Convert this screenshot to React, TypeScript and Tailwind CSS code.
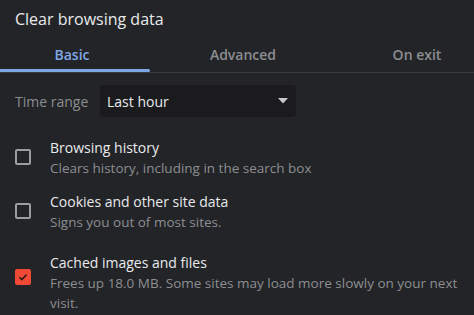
import React from "react";

const font = { fontFamily: '"Open Sans", "Liberation Sans", sans-serif' };

type TItem = {
  title: string;
  desc: string;
  checked: boolean;
  rowClass: string;
  boxClass: string;
};

const items: TItem[] = [
  {
    title: "Browsing history",
    desc: "Clears history, including in the search box",
    checked: false,
    rowClass: "",
    boxClass: "mt-[11px]",
  },
  {
    title: "Cookies and other site data",
    desc: "Signs you out of most sites.",
    checked: false,
    rowClass: "mt-[14px]",
    boxClass: "mt-[11px]",
  },
  {
    title: "Cached images and files",
    desc: "Frees up 18.0 MB. Some sites may load more slowly on your next visit.",
    checked: true,
    rowClass: "mt-[21px]",
    boxClass: "mt-[16px]",
  },
];

const Checkbox = ({ checked }: { checked: boolean }) =>
  checked ? (
    <div className="w-4 h-4 rounded-[2px] bg-[#f04a36] flex items-center justify-center">
      <svg width="12" height="12" viewBox="0 0 12 12">
        <path
          d="M2.5 6.2l2.3 2.3 4.7-4.8"
          fill="none"
          stroke="#2a1a18"
          strokeWidth="1.6"
        />
      </svg>
    </div>
  ) : (
    <div className="w-4 h-4 rounded-[2px] border-2 border-[#9b9ca0]" />
  );

export default function App() {
  return (
    <div
      className="w-[474px] h-[315px] bg-[#232427] text-[#e8eaed] overflow-hidden"
      style={font}
    >
      <div className="pl-[15px] pt-[8px] text-[16px] leading-[22px]">
        Clear browsing data
      </div>

      {/* tabs */}
      <div className="mt-[15px] flex border-b border-[#3c3d40] text-[14px] font-semibold">
        <div className="w-[150px] flex flex-col items-center">
          <span className="text-[#7fa7e6] pr-[6px] h-[24px] leading-[20px]">Basic</span>
          <div className="w-full h-[3px] bg-[#7fa7e6] rounded-r-sm" />
        </div>
        <div className="w-[186px] flex justify-center text-[#8c8e92] leading-[20px]">
          Advanced
        </div>
        <div className="flex-1 flex justify-center pl-[24px] text-[#8c8e92] leading-[20px]">
          On exit
        </div>
      </div>

      {/* time range */}
      <div className="mt-[12px] flex items-center pl-[15px]">
        <span className="w-[85px] text-[14px] text-[#8c8e92]">Time range</span>
        <div className="w-[196px] h-[32px] rounded bg-[#1b1b1e] flex items-center justify-between pl-[7px] pr-[8px]">
          <span className="text-[14px] text-[#e8eaed]">Last hour</span>
          <svg width="10" height="6" viewBox="0 0 10 6">
            <path d="M0 0h10L5 5.5z" fill="#c8c9cc" />
          </svg>
        </div>
      </div>

      {/* options */}
      <div className="mt-[21px] flex flex-col">
        {items.map((item) => (
          <div
            key={item.title}
            className={`flex items-start pl-[15px] pr-[8px] ${item.rowClass}`}
          >
            <div className={`shrink-0 ${item.boxClass}`}>
              <Checkbox checked={item.checked} />
            </div>
            <div className="ml-[19px] leading-[20px]">
              <div className="text-[14px] text-[#e8eaed]">{item.title}</div>
              <div className="text-[13.5px] text-[#8c8e92]">{item.desc}</div>
            </div>
          </div>
        ))}
      </div>
    </div>
  );
}
